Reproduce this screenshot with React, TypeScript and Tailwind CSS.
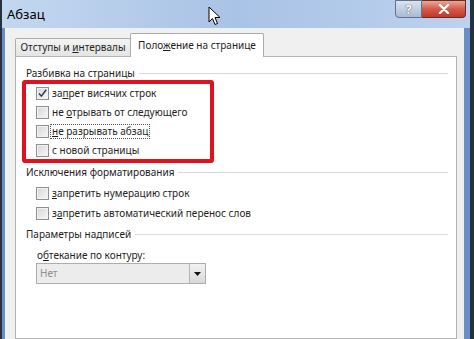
import React from 'react';

const font = "font-['Noto_Sans',_'DejaVu_Sans',_sans-serif]";

function CheckBox({ checked }: { checked?: boolean }) {
  return (
    <div className="w-[13px] h-[13px] flex-shrink-0 border border-[#8e8f8f] bg-gradient-to-br from-[#d6d6d6] to-[#f8f8f8] shadow-[inset_0_0_0_1px_#f2f2f2] flex items-center justify-center">
      {checked && (
        <svg width="11" height="11" viewBox="0 0 11 11">
          <path d="M2 5.6 L4.4 8.2 L9.2 1.8" fill="none" stroke="#2a3c66" strokeWidth="1.5" />
        </svg>
      )}
    </div>
  );
}

function Row({ children, checked, focused, h = 'h-[19px]' }: { children: React.ReactNode; checked?: boolean; focused?: boolean; h?: string }) {
  return (
    <div className={`flex items-center ml-[10px] ${h}`}>
      <CheckBox checked={checked} />
      <span className={`ml-[1px] px-[1px] leading-[13px] whitespace-nowrap border ${focused ? 'border-dotted border-[#555]' : 'border-transparent'}`}>
        {children}
      </span>
    </div>
  );
}

function GroupLabel({ text, className = '' }: { text: string; className?: string }) {
  return (
    <div className={`flex items-center h-[16px] mr-[8px] ${className}`}>
      <span className="text-[#1c1c1c] whitespace-nowrap">{text}</span>
      <div className="flex-1 h-px bg-[#dadada] ml-[4px]" />
    </div>
  );
}

export default function App() {
  return (
    <div className={`relative w-[474px] h-[339px] overflow-hidden bg-[#27313d] pl-[2px] pr-[4px] flex flex-col text-[10px] text-[#1e1e1e] ${font}`}>
      {/* Title bar */}
      <div className="h-[28px] flex items-start justify-between bg-gradient-to-r from-[#c3d7ef] via-[#a9c3e6] to-[#bcd2ee] flex-shrink-0">
        <span className="pl-[5px] pt-[5px] text-[13px] text-black">Абзац</span>
        <div className="flex mr-[4px]">
          <div className="w-[27px] h-[18px] border border-[#5d7190] rounded-bl-[4px] bg-gradient-to-b from-[#dbe4ef] to-[#a8bbd4] flex items-center justify-center">
            <span className="text-[13px] font-bold leading-none text-white [text-shadow:0_0_1px_#3a4a63,0_0_1px_#3a4a63]">?</span>
          </div>
          <div className="w-[44px] h-[18px] border border-l-0 border-[#6b2a24] rounded-br-[4px] bg-gradient-to-b from-[#e9a79c] via-[#d45a48] to-[#c2372a] flex items-center justify-center">
            <svg width="12" height="10" viewBox="0 0 12 10">
              <path d="M2 1 L10 9 M10 1 L2 9" stroke="#fff" strokeWidth="2.4" strokeLinecap="round" />
            </svg>
          </div>
        </div>
      </div>

      {/* Window body */}
      <div className="flex-1 flex border-l-[3px] border-r-[6px] border-[#6a8dc6]">
        <div className="flex-1 bg-[#f0f0f0] pl-[10px] pr-[7px] pt-[5px] flex flex-col">
          {/* Tabs */}
          <div className="flex items-end h-[23px]">
            <div className="w-[116px] h-[18px] border border-b-0 border-[#acacac] rounded-t-[2px] bg-gradient-to-b from-[#f4f4f4] to-[#e4e4e4] flex items-center justify-center whitespace-nowrap">
              <span>Отступы и <u>и</u>нтервалы</span>
            </div>
            <div className="relative z-10 -ml-px -mb-px w-[134px] h-[24px] border border-b-0 border-[#acacac] rounded-t-[2px] bg-white flex items-center justify-center whitespace-nowrap">
              <span>Поло<u>ж</u>ение на странице</span>
            </div>
          </div>

          {/* Tab page */}
          <div className="relative flex-1 bg-white border border-[#b4b4b4] pl-[10px] pt-[8px]">
            <GroupLabel text="Разбивка на страницы" />
            <div className="mt-[3px]">
              <Row checked>за<u>п</u>рет висячих строк</Row>
              <Row>не <u>о</u>трывать от следующего</Row>
              <Row focused><u>н</u>е разрывать абзац</Row>
              <Row>с новой страницы</Row>
            </div>

            <GroupLabel text="Исключения форматирования" className="mt-[4px]" />
            <div className="mt-[3px]">
              <Row h="h-[20px]"><u>з</u>апретить нумерацию строк</Row>
              <Row h="h-[20px]">з<u>а</u>претить автоматический перенос слов</Row>
            </div>

            <GroupLabel text="Параметры надписей" className="mt-[3px]" />
            <div className="mt-[5px] ml-[11px] h-[16px] flex items-center">
              <span>о<u>б</u>текание по контуру:</span>
            </div>
            <div className="ml-[10px] w-[170px] h-[21px] border border-[#adadad] bg-[#ececec] flex items-center">
              <span className="flex-1 pl-[3px] text-[#8f8f8f]">Нет</span>
              <div className="w-[16px] h-[19px] border-l border-[#b5b5b5] bg-gradient-to-b from-[#f2f2f2] to-[#d9d9d9] flex items-center justify-center">
                <svg width="7" height="4" viewBox="0 0 7 4">
                  <path d="M0 0 L7 0 L3.5 4 Z" fill="#111" />
                </svg>
              </div>
            </div>

            {/* red annotation frame */}
            <div className="absolute left-[6px] top-[23px] w-[192px] h-[83px] border-[4px] border-[#e0121c] rounded-[3px]" />
          </div>
        </div>
      </div>

      {/* mouse pointer */}
      <svg className="absolute left-[208px] top-[6px]" width="13" height="20" viewBox="0 0 13 20">
        <path d="M1 1 L1 16 L4.5 12.5 L7 18.5 L9.5 17.5 L7 11.5 L12 11.5 Z" fill="#fff" stroke="#000" strokeWidth="1" strokeLinejoin="round" />
      </svg>
    </div>
  );
}
